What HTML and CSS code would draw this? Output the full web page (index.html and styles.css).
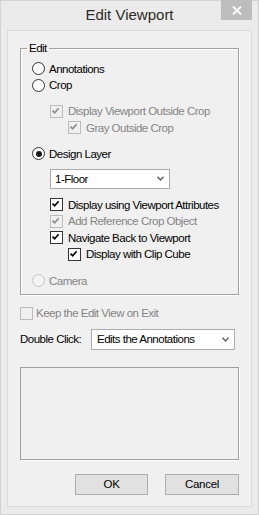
FILE: index.html
```html
<!DOCTYPE html>
<html>
<head>
<meta charset="utf-8">
<link rel="stylesheet" href="styles.css">
</head>
<body>
<div class="window">
  <div class="titlebar">
    <span class="title">Edit Viewport</span>
    <div class="close">
      <svg width="10" height="9" viewBox="0 0 10 9"><path d="M1 0.5 L9 8.5 M9 0.5 L1 8.5" stroke="#fff" stroke-width="1.8" fill="none"/></svg>
    </div>
  </div>
  <div class="client">
    <fieldset class="group">
      <legend>Edit</legend>
      <div class="row ind0 first"><span class="radio"></span><span>Annotations</span></div>
      <div class="row ind0"><span class="radio"></span><span>Crop</span></div>
      <div class="row ind1 dis sp1"><span class="cb"><svg viewBox="0 0 13 13"><path d="M2.8 6.4 L5.3 9 L10 3.6"/></svg></span><span>Display Viewport Outside Crop</span></div>
      <div class="row ind2 dis"><span class="cb"><svg viewBox="0 0 13 13"><path d="M2.8 6.4 L5.3 9 L10 3.6"/></svg></span><span>Gray Outside Crop</span></div>
      <div class="row ind0 sp2"><span class="radio on"></span><span>Design Layer</span></div>
      <div class="select layer"><span>1-Floor</span><svg class="chev" width="7" height="5" viewBox="0 0 7 5"><path d="M0.5 0.8 L3.5 4 L6.5 0.8"/></svg></div>
      <div class="row ind1 sp3"><span class="cb"><svg viewBox="0 0 13 13"><path d="M2.8 6.4 L5.3 9 L10 3.6"/></svg></span><span>Display using Viewport Attributes</span></div>
      <div class="row ind1 dis"><span class="cb"><svg viewBox="0 0 13 13"><path d="M2.8 6.4 L5.3 9 L10 3.6"/></svg></span><span>Add Reference Crop Object</span></div>
      <div class="row ind1"><span class="cb"><svg viewBox="0 0 13 13"><path d="M2.8 6.4 L5.3 9 L10 3.6"/></svg></span><span>Navigate Back to Viewport</span></div>
      <div class="row ind2"><span class="cb"><svg viewBox="0 0 13 13"><path d="M2.8 6.4 L5.3 9 L10 3.6"/></svg></span><span>Display with Clip Cube</span></div>
      <div class="row ind0 dis sp4"><span class="radio"></span><span>Camera</span></div>
    </fieldset>
    <div class="row keep dis"><span class="cb empty"></span><span>Keep the Edit View on Exit</span></div>
    <div class="dbl">
      <span class="dbl-label">Double Click:</span>
      <div class="select action"><span>Edits the Annotations</span><svg class="chev" width="7" height="5" viewBox="0 0 7 5"><path d="M0.5 0.8 L3.5 4 L6.5 0.8"/></svg></div>
    </div>
    <div class="blank"></div>
    <div class="buttons">
      <div class="btn ok">OK</div>
      <div class="btn cancel">Cancel</div>
    </div>
  </div>
</div>
</body>
</html>
```
FILE: styles.css
```css
html, body {
  margin: 0;
  padding: 0;
}
body {
  font-family: "Liberation Sans", Arial, sans-serif;
  font-size: 11.5px;
  letter-spacing: -0.5px;
  color: #000;
}
.window {
  width: 259px;
  height: 515px;
  box-sizing: border-box;
  background: #ebebeb;
  box-shadow: inset 0 0 0 1px #d3d3d3;
  display: flex;
  flex-direction: column;
}
.titlebar {
  height: 30px;
  display: grid;
  grid-template-columns: 1fr auto 1fr;
  padding: 0 7px;
  box-sizing: border-box;
}
.title {
  grid-column: 2;
  font-size: 15px;
  letter-spacing: 0;
  color: #2b2b2b;
  line-height: 30px;
  padding-top: 0;
}
.close {
  grid-column: 3;
  justify-self: end;
  width: 31px;
  height: 20px;
  background: #bdbdbd;
  display: flex;
  align-items: center;
  justify-content: center;
}
.client {
  margin: 0 7px 8px 7px;
  flex: 1;
  background: #f0f0f0;
  border: 1px solid #dadada;
  padding: 11px 12px 0 12px;
  display: flex;
  flex-direction: column;
}
.group {
  margin: 0;
  padding: 0 0 4.75px 0;
  border: 1px solid #a0a0a0;
  box-shadow: 1px 1px 0 #fff, inset 1px 1px 0 #fff;
  min-width: 0;
}
.group legend {
  margin-left: 6px;
  padding: 0 2px;
  line-height: 12px;
  font-size: 11.5px;
}
.row {
  height: 16.5px;
  display: flex;
  align-items: center;
  gap: 4px;
  white-space: nowrap;
}
.row.first { margin-top: 6.25px; }
.row.sp1 { margin-top: 9.5px; }
.row.sp2 { margin-top: 9.75px; }
.row.sp3 { margin-top: 7.75px; }
.row.sp4 { margin-top: 10px; }
.ind0 { padding-left: 11px; }
.ind1 { padding-left: 29px; }
.ind2 { padding-left: 47px; }
.ind1 .cb, .ind2 .cb { margin-right: 1px; }
.dis { color: #858585; }
.radio {
  width: 13px;
  height: 13px;
  box-sizing: border-box;
  border: 1px solid #333;
  border-radius: 50%;
  background: #fff;
  display: flex;
  align-items: center;
  justify-content: center;
  flex: none;
}
.radio.on::after {
  content: "";
  width: 6px;
  height: 6px;
  border-radius: 50%;
  background: #1a1a1a;
}
.dis .radio {
  border-color: #c4c4c4;
  background: #f3f3f3;
}
.cb {
  width: 13px;
  height: 13px;
  box-sizing: border-box;
  border: 1px solid #333;
  background: #fff;
  flex: none;
  display: block;
}
.cb svg {
  display: block;
  width: 11px;
  height: 11px;
  margin: 0;
}
.cb svg path {
  fill: none;
  stroke: #000;
  stroke-width: 2;
  transform: translate(-1px, -1px);
}
.dis .cb {
  border-color: #bcbcbc;
  background: #f0f0f0;
}
.dis .cb svg path {
  stroke: #8d8d8d;
}
.select {
  height: 20px;
  box-sizing: border-box;
  border: 1px solid #acacac;
  background: #fff;
  display: flex;
  align-items: center;
  justify-content: space-between;
  padding: 0 5px 0 4px;
  white-space: nowrap;
}
.select .chev path {
  fill: none;
  stroke: #606060;
  stroke-width: 1.4;
}
.layer {
  width: 120px;
  margin: 6.5px 0 0 29px;
}
.keep {
  margin-top: 10.25px;
  gap: 3px;
}
.keep .cb { margin-top: 1px; }
.dbl {
  margin-top: 7.25px;
  display: flex;
  align-items: center;
}
.dbl-label {
  width: 71px;
  flex: none;
}
.action {
  width: 144px;
  height: 21px;
  padding: 0 5px 0 5px;
}
.blank {
  margin-top: 17px;
  height: 93px;
  box-sizing: border-box;
  border: 1px solid #a0a0a0;
  box-shadow: 1px 1px 0 #fff;
}
.buttons {
  margin-top: 14px;
  display: flex;
  justify-content: flex-end;
  gap: 17px;
}
.btn {
  height: 21px;
  box-sizing: border-box;
  border: 1px solid #adadad;
  background: #e1e1e1;
  display: flex;
  align-items: center;
  justify-content: center;
  letter-spacing: -0.3px;
}
.ok { width: 73px; }
.cancel { width: 74px; }
```
